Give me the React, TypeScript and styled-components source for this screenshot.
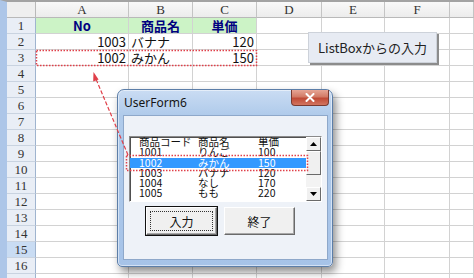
import React from 'react';
import styled, { createGlobalStyle, css } from 'styled-components';

// --- Global ---
const GlobalStyle = createGlobalStyle`
  html, body {
    margin: 0;
    padding: 0;
    background: #ffffff;
  }
  body {
    font-family: "Noto Sans CJK JP", "Noto Sans", sans-serif;
    width: 474px;
    height: 278px;
    overflow: hidden;
  }
`;

const Page = styled.div`
  position: relative;
  width: 474px;
  height: 278px;
  overflow: hidden;
  background: #ffffff;
`;

// --- Excel sheet ---
const Sheet = styled.div`
  display: grid;
  grid-template-columns: 29px 93px 64px 64px 65px 63px 65px 1fr;
  grid-auto-rows: 16px;
  border-left: 7px solid #adc6e8;
  border-top: 2px solid #a3a3a3;
  font-size: 13px;
  color: #111;
`;

const Corner = styled.div`
  background: #efefef;
  border-right: 1px solid #b9b9b9;
  border-bottom: 1px solid #b9b9b9;
`;

const ColHead = styled.div`
  background: linear-gradient(180deg, #f9f9f9 0%, #ececec 100%);
  border-right: 1px solid #c4c4c4;
  border-bottom: 1px solid #b9b9b9;
  text-align: center;
  line-height: 15px;
  color: #333;
  font-family: "Liberation Serif", "Noto Sans CJK JP", serif;
`;

const RowHead = styled.div<{ $active?: boolean }>`
  background: ${(p) => (p.$active ? '#c9dcf3' : '#e9eef6')};
  border-right: 1px solid #9fb4cf;
  border-bottom: 1px solid #c9d3e0;
  text-align: center;
  line-height: 15px;
  color: #333;
  font-family: "Liberation Serif", "Noto Sans CJK JP", serif;
`;

const Cell = styled.div<{ $align?: 'left' | 'right' | 'center'; $head?: boolean }>`
  border-right: 1px solid #d2d2d2;
  border-bottom: 1px solid #d2d2d2;
  padding: 0 2px;
  line-height: 15px;
  white-space: nowrap;
  text-align: ${(p) => p.$align || 'left'};
  ${(p) =>
    p.$head &&
    css`
      background: #ccf3c6;
      color: #000080;
      font-weight: 700;
    `}
`;

// --- Floating form button on the sheet ---
const SheetButton = styled.div`
  position: absolute;
  left: 308px;
  top: 32px;
  width: 127px;
  height: 29px;
  background: #e7ebf3;
  border: 1px solid #cdd2da;
  box-shadow: 2px 2px 0 #8c8c8c;
  display: flex;
  align-items: center;
  justify-content: center;
  font-size: 13px;
  color: #222;
`;

// --- UserForm dialog ---
const Dialog = styled.div`
  position: absolute;
  left: 117px;
  top: 89px;
  width: 216px;
  height: 178px;
  box-sizing: border-box;
  border: 1px solid #5c7ea8;
  border-radius: 7px 7px 5px 5px;
  background: linear-gradient(180deg, #cadcf3 0%, #b0cbeb 14%, #a6c3e8 100%);
  box-shadow: 3px 5px 8px rgba(0, 0, 0, 0.45), inset 0 0 0 1px rgba(255, 255, 255, 0.5);
  display: flex;
  flex-direction: column;
  padding: 0 4px 6px 5px;
`;

const TitleBar = styled.div`
  height: 25px;
  display: flex;
  align-items: center;
  padding-left: 1px;
  font-family: "Noto Sans", "Open Sans", sans-serif;
  font-size: 12px;
  color: #151515;
`;

const CloseBtn = styled.div`
  position: absolute;
  top: 0;
  right: 3px;
  width: 38px;
  height: 16px;
  box-sizing: border-box;
  border: 1px solid #7a3a30;
  border-top: none;
  border-radius: 0 0 4px 4px;
  background: linear-gradient(180deg, #e6a595 0%, #d27a66 45%, #c04a36 55%, #d27560 100%);
  display: flex;
  align-items: center;
  justify-content: center;
`;

const Client = styled.div`
  position: relative;
  flex: 1;
  background: #eef2f8;
  border: 1px solid #8ea8ca;
  padding: 20px 0 0 5px;
  display: flex;
  flex-direction: column;
`;

const ListBox = styled.div`
  width: 193px;
  height: 66px;
  box-sizing: border-box;
  border: 1px solid;
  border-color: #8a8a8a #ffffff #ffffff #8a8a8a;
  box-shadow: inset 1px 1px 0 #505050;
  background: #ffffff;
  display: flex;
`;

const ListItems = styled.div`
  flex: 1;
  font-size: 10.5px;
  color: #111;
`;

const ListRow = styled.div<{ $selected?: boolean }>`
  display: grid;
  grid-template-columns: 59px 60px 1fr;
  height: 10.25px;
  line-height: 10.25px;
  padding-left: 9px;
  white-space: nowrap;
  ${(p) =>
    p.$selected &&
    css`
      background: #3399ff;
      color: #ffffff;
    `}
`;

const ScrollBar = styled.div`
  width: 15px;
  display: flex;
  flex-direction: column;
  background: #f3f3f3;
`;

const ScrollButton = styled.div`
  height: 14px;
  box-sizing: border-box;
  background: #f0f0f0;
  border: 1px solid;
  border-color: #ffffff #6a6a6a #6a6a6a #ffffff;
  display: flex;
  align-items: center;
  justify-content: center;
`;

const ScrollThumb = styled(ScrollButton)`
  height: 24px;
`;

const ScrollTrack = styled.div`
  flex: 1;
`;

const ButtonRow = styled.div`
  display: flex;
  gap: 7px;
  margin: 5px 0 0 17px;
`;

const Button = styled.div<{ $default?: boolean }>`
  position: relative;
  width: 71px;
  height: 28px;
  box-sizing: border-box;
  background: #f0f0f0;
  border: 1px solid;
  border-color: #ffffff #6a6a6a #6a6a6a #ffffff;
  box-shadow: inset -1px -1px 0 #a8a8a8;
  display: flex;
  align-items: center;
  justify-content: center;
  font-size: 12px;
  color: #111;
  ${(p) =>
    p.$default &&
    css`
      outline: 1px solid #111;
      &::after {
        content: '';
        position: absolute;
        inset: 3px;
        border: 1px dotted #333;
      }
    `}
`;

// --- Red annotation overlay ---
const Annotations = styled.svg`
  position: absolute;
  left: 0;
  top: 0;
  pointer-events: none;
`;

const columns = ['A', 'B', 'C', 'D', 'E', 'F', ''];

const data: { v: string; a: 'left' | 'right' | 'center' }[][] = [
  [
    { v: 'No', a: 'center' },
    { v: '商品名', a: 'center' },
    { v: '単価', a: 'center' },
  ],
  [
    { v: '1003', a: 'right' },
    { v: 'バナナ', a: 'left' },
    { v: '120', a: 'right' },
  ],
  [
    { v: '1002', a: 'right' },
    { v: 'みかん', a: 'left' },
    { v: '150', a: 'right' },
  ],
];

const listItems = [
  ['商品コード', '商品名', '単価'],
  ['1001', 'りんご', '100'],
  ['1002', 'みかん', '150'],
  ['1003', 'バナナ', '120'],
  ['1004', 'なし', '170'],
  ['1005', 'もも', '220'],
];

const App: React.FC = () => {
  const rows = Array.from({ length: 17 }, (_, i) => i + 1);

  return (
    <Page>
      <GlobalStyle />
      <Sheet>
        <Corner />
        {columns.map((c, i) => (
          <ColHead key={i}>{c}</ColHead>
        ))}
        {rows.map((r) => (
          <React.Fragment key={r}>
            <RowHead $active={r === 15}>{r}</RowHead>
            {columns.map((_, ci) => {
              const d = data[r - 1]?.[ci];
              return (
                <Cell key={ci} $align={d?.a} $head={r === 1 && ci < 3}>
                  {d?.v}
                </Cell>
              );
            })}
          </React.Fragment>
        ))}
      </Sheet>

      <SheetButton>ListBoxからの入力</SheetButton>

      <Dialog>
        <TitleBar>UserForm6</TitleBar>
        <CloseBtn>
          <svg width="10" height="9" viewBox="0 0 10 9">
            <path d="M1.5 1 L8.5 8 M8.5 1 L1.5 8" stroke="#ffffff" strokeWidth="2" strokeLinecap="round" />
          </svg>
        </CloseBtn>
        <Client>
          <ListBox>
            <ListItems>
              {listItems.map((row, i) => (
                <ListRow key={i} $selected={i === 2}>
                  {row.map((v, j) => (
                    <span key={j}>{v}</span>
                  ))}
                </ListRow>
              ))}
            </ListItems>
            <ScrollBar>
              <ScrollButton>
                <svg width="7" height="4" viewBox="0 0 7 4">
                  <path d="M0 4 L3.5 0 L7 4 Z" fill="#000" />
                </svg>
              </ScrollButton>
              <ScrollThumb />
              <ScrollTrack />
              <ScrollButton>
                <svg width="7" height="4" viewBox="0 0 7 4">
                  <path d="M0 0 L3.5 4 L7 0 Z" fill="#000" />
                </svg>
              </ScrollButton>
            </ScrollBar>
          </ListBox>
          <ButtonRow>
            <Button $default>入力</Button>
            <Button>終了</Button>
          </ButtonRow>
        </Client>
      </Dialog>

      <Annotations width="474" height="278" viewBox="0 0 474 278">
        <rect x="36.5" y="50.5" width="220" height="15" fill="none" stroke="#e0404a" strokeWidth="1.5" strokeDasharray="1.5 1.5" />
        <rect x="126.5" y="155.5" width="181" height="15" fill="none" stroke="#e0404a" strokeWidth="1.5" strokeDasharray="1.5 1.5" />
        <line x1="128" y1="155" x2="96" y2="79" stroke="#e0404a" strokeWidth="1.2" strokeDasharray="4 2" />
        <polygon points="93.5,72 98.6,79.4 93.2,81.6" fill="#e0404a" />
      </Annotations>
    </Page>
  );
};

export default App;
